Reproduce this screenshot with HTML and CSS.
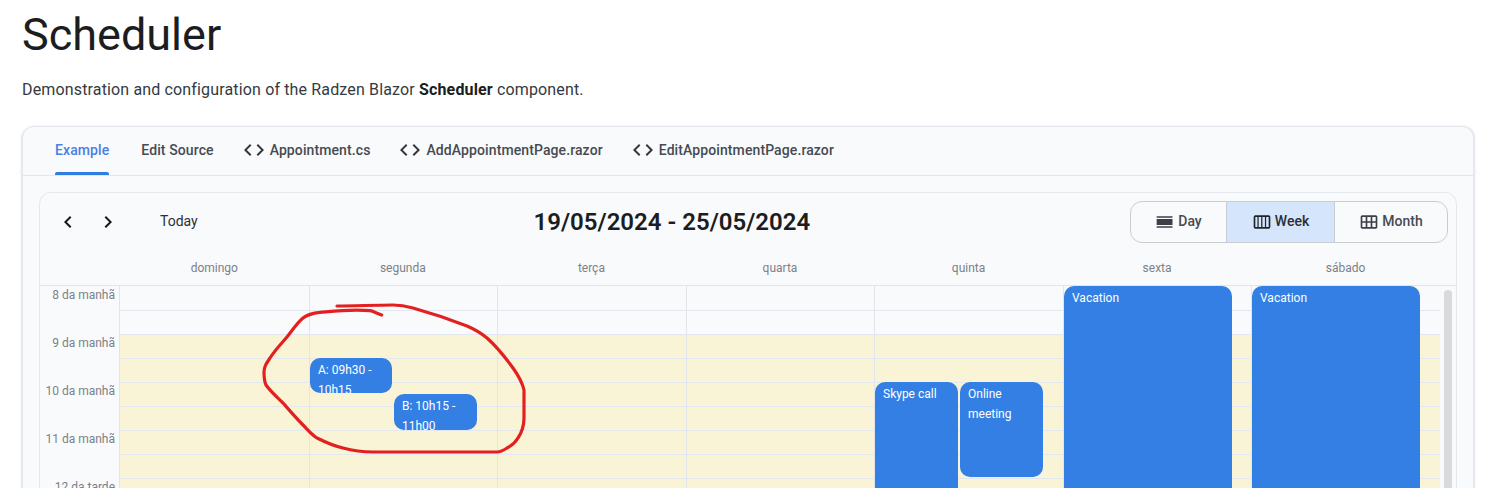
FILE: index.html
```html
<!DOCTYPE html>
<html lang="pt">
<head>
<meta charset="utf-8">
<title>Scheduler</title>
<link rel="stylesheet" href="styles.css">
</head>
<body>
<div class="page">
  <h1 class="title">Scheduler</h1>
  <p class="lead">Demonstration and configuration of the Radzen Blazor <strong>Scheduler</strong> component.</p>
  <section class="card">
    <nav class="tabs">
      <a class="tab active">Example</a>
      <a class="tab">Edit Source</a>
      <a class="tab"><svg class="ic-code" viewBox="0 0 24 24"><path d="M9.4 16.6L4.8 12l4.6-4.6L8 6l-6 6 6 6 1.4-1.4zm5.2 0l4.6-4.6-4.6-4.6L16 6l6 6-6 6-1.4-1.4z"/></svg>Appointment.cs</a>
      <a class="tab"><svg class="ic-code" viewBox="0 0 24 24"><path d="M9.4 16.6L4.8 12l4.6-4.6L8 6l-6 6 6 6 1.4-1.4zm5.2 0l4.6-4.6-4.6-4.6L16 6l6 6-6 6-1.4-1.4z"/></svg>AddAppointmentPage.razor</a>
      <a class="tab"><svg class="ic-code" viewBox="0 0 24 24"><path d="M9.4 16.6L4.8 12l4.6-4.6L8 6l-6 6 6 6 1.4-1.4zm5.2 0l4.6-4.6-4.6-4.6L16 6l6 6-6 6-1.4-1.4z"/></svg>EditAppointmentPage.razor</a>
    </nav>
    <div class="tab-body">
      <div class="scheduler">
        <header class="toolbar">
          <div class="nav">
            <button class="nav-btn"><svg class="ic-nav" viewBox="0 0 24 24"><path d="M15.41 7.41L14 6l-6 6 6 6 1.41-1.41L10.83 12z"/></svg></button>
            <button class="nav-btn"><svg class="ic-nav" viewBox="0 0 24 24"><path d="M10 6L8.59 7.41 13.17 12l-4.58 4.59L10 18l6-6z"/></svg></button>
            <button class="today">Today</button>
          </div>
          <div class="range">19/05/2024 - 25/05/2024</div>
          <div class="views">
            <button class="view v-day"><svg class="ic-view" viewBox="0 0 24 24"><path d="M2 5h19v2H2zM2 8.500h19v7H2zM2 17h19v2H2z"/></svg>Day</button>
            <button class="view v-week selected"><svg class="ic-view" viewBox="0 0 24 24"><path fill-rule="evenodd" d="M4 4h16a2 2 0 0 1 2 2v12a2 2 0 0 1-2 2H4a2 2 0 0 1-2-2V6a2 2 0 0 1 2-2zM4 6v12h2.500V6zM8 6v12h3V6zM12.500 6v12h3V6zM17 6v12h3V6z"/></svg>Week</button>
            <button class="view v-month"><svg class="ic-view" viewBox="0 0 24 24"><path d="M20 4H4c-1.100 0-2 .9-2 2v12c0 1.100.9 2 2 2h16c1.100 0 2-.9 2-2V6c0-1.100-.9-2-2-2zM8 11H4V6h4v5zm6 0h-4V6h4v5zm6 0h-4V6h4v5zM8 18H4v-5h4v5zm6 0h-4v-5h4v5zm6 0h-4v-5h4v5z"/></svg>Month</button>
          </div>
        </header>
        <div class="days">
          <div class="day-name">domingo</div>
          <div class="day-name">segunda</div>
          <div class="day-name">terça</div>
          <div class="day-name">quarta</div>
          <div class="day-name">quinta</div>
          <div class="day-name">sexta</div>
          <div class="day-name">sábado</div>
        </div>
        <div class="grid-wrap">
          <div class="times">
            <div class="time">8 da manhã</div>
            <div class="time">9 da manhã</div>
            <div class="time">10 da manhã</div>
            <div class="time">11 da manhã</div>
            <div class="time">12 da tarde</div>
          </div>
          <div class="grid">
            <div class="col"><div class="slot off"></div><div class="slot off"></div><div class="slot"></div><div class="slot"></div><div class="slot"></div><div class="slot"></div><div class="slot"></div><div class="slot"></div><div class="slot"></div></div>
            <div class="col"><div class="slot off"></div><div class="slot off"></div><div class="slot"></div><div class="slot"></div><div class="slot"></div><div class="slot"></div><div class="slot"></div><div class="slot"></div><div class="slot"></div></div>
            <div class="col"><div class="slot off"></div><div class="slot off"></div><div class="slot"></div><div class="slot"></div><div class="slot"></div><div class="slot"></div><div class="slot"></div><div class="slot"></div><div class="slot"></div></div>
            <div class="col"><div class="slot off"></div><div class="slot off"></div><div class="slot"></div><div class="slot"></div><div class="slot"></div><div class="slot"></div><div class="slot"></div><div class="slot"></div><div class="slot"></div></div>
            <div class="col"><div class="slot off"></div><div class="slot off"></div><div class="slot"></div><div class="slot"></div><div class="slot"></div><div class="slot"></div><div class="slot"></div><div class="slot"></div><div class="slot"></div></div>
            <div class="col"><div class="slot off"></div><div class="slot off"></div><div class="slot"></div><div class="slot"></div><div class="slot"></div><div class="slot"></div><div class="slot"></div><div class="slot"></div><div class="slot"></div></div>
            <div class="col"><div class="slot off"></div><div class="slot off"></div><div class="slot"></div><div class="slot"></div><div class="slot"></div><div class="slot"></div><div class="slot"></div><div class="slot"></div><div class="slot"></div></div>
            <div class="event e-a">A: 09h30 - 10h15</div>
            <div class="event e-b">B: 10h15 - 11h00</div>
            <div class="event e-skype">Skype call</div>
            <div class="event e-online">Online meeting</div>
            <div class="event e-vac1">Vacation</div>
            <div class="event e-vac2">Vacation</div>
          </div>
          <div class="scroll"><div class="thumb"></div></div>
        </div>
      </div>
    </div>
  </section>
</div>
<svg class="annotation" viewBox="0 0 1487 488" fill="none"><path d="M381.700 315 C376 313 373 311 370 310.700 C352 309 335 311 320 312.300 C313 313 308 314 303 318 C296 324 292 331 287 337 C281 344 275 350 270 358 C266 364 264 367 264 372 C264 379 264 381 266 385 C271 392 277 397 283 403 C290 411 296 418 303 425 C308 430 312 435 317 438 C325 442 334 446 343 448 C354 451 363 452 373 452 L497 452 C501 452 504 450 507 448 C511 446 515 443 518 438 C522 432 524 426 524 418 L524 390 C522 381 518 375 513 368 C505 357 496 346 487 338 C481 333 474 329 467 326 C449 319 431 313 413 308 C406 306 400 305 393 305 C374 305 355 306 337 306" /></svg>
</body>
</html>
```
FILE: styles.css
```css
* { box-sizing: border-box; }
html, body { margin: 0; padding: 0; height: 488px; overflow: hidden; background: #fff; }
body { font-family: Roboto, "Liberation Sans", sans-serif; color: #212529; position: relative; }
.page { padding: 0 13px 0 22px; }
.title { margin: 0; padding-top: 8px; font-size: 45px; line-height: 54px; font-weight: 400; color: #1b1d20; }
.lead { margin: 18px 0 0; font-size: 16px; line-height: 20px; color: #333a42; letter-spacing: 0.15px; }
.lead strong { font-weight: 700; color: #1b1d20; }
.card { margin-top: 26px; background: #f9fafb; border: 1px solid #e3e7ee; border-radius: 12px; box-shadow: -1px 1px 2px #dfe3e9, 1px 0 2px #dfe3e9; height: 500px; }
.tabs { display: flex; height: 49px; padding-left: 16px; border-bottom: 1px solid #e1e5ec; }
.tab { display: flex; align-items: center; height: 46px; margin-bottom: 2px; padding: 0 16px; font-size: 14px; font-weight: 500; letter-spacing: 0.1px; color: #464b53; gap: 4px; position: relative; }
.tab.active { color: #4a7fe5; }
.tab.active::after { content: ""; position: absolute; left: 16px; right: 16px; bottom: -2px; height: 3px; background: #2f7de1; border-radius: 2px 2px 0 0; }
.ic-code { width: 24px; height: 24px; margin-left: -4px; fill: #33383f; }
.tab-body { padding: 16px; }
.scheduler { background: #f9fafb; border: 1px solid #e3e7ee; border-radius: 12px; height: 440px; }
.toolbar { display: flex; justify-content: space-between; align-items: center; height: 58px; padding: 0 8px; }
.nav { display: flex; align-items: center; }
button { font-family: inherit; background: none; border: 0; padding: 0; margin: 0; }
.nav-btn { width: 40px; height: 42px; display: flex; align-items: center; justify-content: center; }
.ic-nav { width: 24px; height: 24px; fill: #15181c; }
.today { margin-left: 32px; padding: 0 16px 2px 0; font-size: 14px; color: #2b3036; }
.range { font-size: 24px; line-height: 30px; font-weight: 600; color: #1b1d20; }
.views { display: flex; height: 42px; border: 1px solid #c9ccd3; border-radius: 12px; overflow: hidden; }
.view { display: flex; align-items: center; justify-content: center; gap: 3px; padding-bottom: 2px; font-size: 14px; font-weight: 500; color: #464b53; border-left: 1px solid #c9ccd3; }
.view:first-child { border-left: 0; }
.v-day { width: 95px; }
.v-week { width: 108px; }
.v-month { width: 113px; }
.view.selected { background: #d5e5fb; color: #2a2f36; }
.ic-view { width: 20px; height: 20px; margin-top: 2px; fill: #3b4048; }
.selected .ic-view { fill: #20252b; }
.days { display: grid; grid-template-columns: repeat(7, 188.57px); height: 34px; margin-left: 80px; }
.day-name { text-align: center; font-size: 12px; line-height: 18px; padding-top: 8px; color: #7c8189; }
.grid-wrap { display: flex; border-top: 1px solid #e1e5ec; height: 340px; }
.times { width: 80px; flex: none; border-right: 1px solid #e1e5ec; }
.time { height: 48px; padding: 0 4px 0 0; text-align: right; font-size: 12px; line-height: 18px; color: #7c8189; }
.grid { position: relative; flex: none; width: 1320px; display: grid; grid-template-columns: repeat(7, 188.57px); }
.col { padding-top: 1px; background: #f9fafc; border-left: 1px solid #e1e5ec; }
.col:first-child { border-left: 0; }
.slot { height: 24px; background: #f9f4d5; border-bottom: 1px solid #e2e7f0; }
.slot.off { background: #f9fafc; }
.scroll { flex: 1; position: relative; }
.thumb { position: absolute; left: 4px; top: 4px; width: 8px; height: 300px; background: #d9dadb; border-radius: 4px; }
.event { position: absolute; background: #337fe3; color: #fff; font-size: 12px; line-height: 20px; padding: 2px 8px 0; border-radius: 10px; overflow: hidden; }
.e-a { left: 190px; top: 72px; width: 82px; height: 35px; }
.e-b { left: 274px; top: 108px; width: 83px; height: 36px; }
.e-skype { left: 755px; top: 96px; width: 83px; height: 200px; border-radius: 10px 10px 0 0; }
.e-online { left: 840px; top: 96px; width: 83px; height: 95px; }
.e-vac1 { left: 944px; top: 0; width: 168px; height: 300px; border-radius: 10px 10px 0 0; }
.e-vac2 { left: 1132px; top: 0; width: 168px; height: 300px; border-radius: 10px 10px 0 0; }
.annotation { position: absolute; left: 0; top: 0; width: 1487px; height: 488px; pointer-events: none; }
.annotation path { stroke: #e3201f; stroke-width: 3.2; stroke-linecap: round; stroke-linejoin: round; }
```
